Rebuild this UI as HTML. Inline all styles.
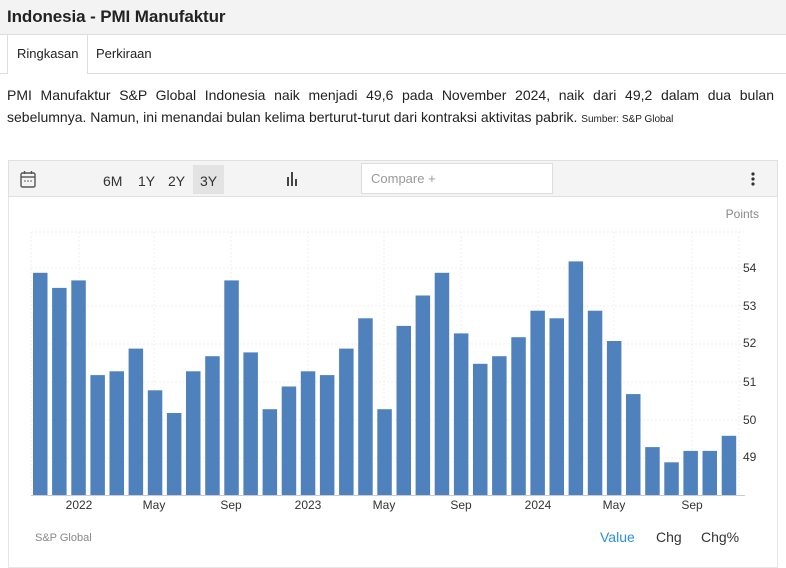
<!DOCTYPE html>
<html><head><meta charset="utf-8"><style>
body{margin:0;width:786px;height:568px;overflow:hidden;background:#fff;font-family:"Liberation Sans",sans-serif;color:#333}
.hdr{position:absolute;left:0;top:0;width:786px;height:34px;background:#f3f3f3;border-bottom:1px solid #ddd}
.hdr span{position:absolute;left:7px;top:7px;font-size:17px;font-weight:bold;color:#222;letter-spacing:-0.1px}
.tabs{position:absolute;left:0;top:35px;width:786px;height:38px;border-bottom:1px solid #ddd}
.tab1{position:absolute;left:7px;top:0;width:79px;border-right:1px solid #ddd;border-left:1px solid #ddd;background:#fff;height:39px}
.tab1 span,.tab2{position:absolute;top:11px;font-size:13px;color:#222}
.tab1 span{left:9px}
.tab2{left:96px}
.txt{position:absolute;left:7px;top:84px;width:767px;font-size:14px;line-height:22px;text-align:justify;color:#222}
.txt small{font-size:10px}
.box{position:absolute;left:8px;top:160px;width:768px;height:406px;border:1px solid #e6e6e6}
.tb{position:absolute;left:8px;top:160px;width:768px;height:35px;background:#f4f4f4;border:1px solid #e0e0e0}
.r{position:absolute;top:12px;font-size:14px;color:#333}
.cmp{position:absolute;left:352px;top:2px;width:190px;height:29px;background:#fff;border:1px solid #ddd}
.cmp span{position:absolute;left:9px;top:7px;font-size:13px;color:#999}
</style></head><body>
<div class="hdr"><span>Indonesia - PMI Manufaktur</span></div>
<div class="tabs"><div class="tab1"><span>Ringkasan</span></div><div class="tab2">Perkiraan</div></div>
<div class="txt">PMI Manufaktur S&amp;P Global Indonesia naik menjadi 49,6 pada November 2024, naik dari 49,2 dalam dua bulan sebelumnya. Namun, ini menandai bulan kelima berturut-turut dari kontraksi aktivitas pabrik. <small>Sumber: S&amp;P Global</small></div>
<div class="box"></div>
<div class="tb">
<svg style="position:absolute;left:11px;top:9px" width="16" height="18" viewBox="0 0 16 18"><rect x="1" y="3" width="14" height="14" rx="1.5" fill="none" stroke="#555" stroke-width="1.4"/><line x1="1" y1="7" x2="15" y2="7" stroke="#555" stroke-width="1.4"/><line x1="4.5" y1="1" x2="4.5" y2="4" stroke="#555" stroke-width="1.4"/><line x1="11.5" y1="1" x2="11.5" y2="4" stroke="#555" stroke-width="1.4"/><circle cx="5" cy="11" r=".8" fill="#555"/><circle cx="8" cy="11" r=".8" fill="#555"/><circle cx="11" cy="11" r=".8" fill="#555"/></svg>
<span class="r" style="left:94px">6M</span><span class="r" style="left:129px">1Y</span><span class="r" style="left:159px">2Y</span>
<div style="position:absolute;left:184px;top:4px;width:31px;height:29px;background:#e3e3e3"></div><span class="r" style="left:191px">3Y</span>
<svg style="position:absolute;left:277px;top:10px" width="14" height="16"><rect x="1" y="6" width="2" height="9" fill="#444"/><rect x="5" y="1" width="2" height="14" fill="#444"/><rect x="9" y="8" width="2" height="7" fill="#444"/></svg>
<div class="cmp"><span>Compare +</span></div>
<svg style="position:absolute;left:742px;top:10px" width="4" height="16"><circle cx="2" cy="3" r="1.6" fill="#333"/><circle cx="2" cy="8" r="1.6" fill="#333"/><circle cx="2" cy="13" r="1.6" fill="#333"/></svg>
</div>
<svg style="position:absolute;left:0;top:0" width="786" height="568" font-family="Liberation Sans, sans-serif">
<text x="759" y="218" font-size="12" fill="#888" text-anchor="end">Points</text>
<g stroke="#efefef" stroke-dasharray="2,2" stroke-width="1">
<line x1="31" y1="232" x2="745" y2="232"/>
<line x1="31" y1="268" x2="745" y2="268"/><line x1="31" y1="306" x2="745" y2="306"/><line x1="31" y1="344" x2="745" y2="344"/><line x1="31" y1="382" x2="745" y2="382"/><line x1="31" y1="420" x2="745" y2="420"/><line x1="31" y1="458" x2="745" y2="458"/>
<line x1="31" y1="232" x2="31" y2="495"/>
<line x1="79" y1="232" x2="79" y2="495"/><line x1="154" y1="232" x2="154" y2="495"/><line x1="231" y1="232" x2="231" y2="495"/><line x1="308" y1="232" x2="308" y2="495"/><line x1="384" y1="232" x2="384" y2="495"/><line x1="461" y1="232" x2="461" y2="495"/><line x1="538" y1="232" x2="538" y2="495"/><line x1="614" y1="232" x2="614" y2="495"/><line x1="692" y1="232" x2="692" y2="495"/><line x1="739" y1="232" x2="739" y2="495"/>
</g>
<line x1="31" y1="495.5" x2="745" y2="495.5" stroke="#ccc"/>
<g font-size="12" fill="#333">
<text x="743" y="272">54</text><text x="743" y="310">53</text><text x="743" y="347">52</text><text x="743" y="386">51</text><text x="743" y="424">50</text><text x="743" y="461">49</text>
</g>
<g font-size="12" fill="#333" text-anchor="middle">
<text x="79" y="509">2022</text><text x="154" y="509">May</text><text x="231" y="509">Sep</text><text x="308" y="509">2023</text><text x="384" y="509">May</text><text x="461" y="509">Sep</text><text x="538" y="509">2024</text><text x="614" y="509">May</text><text x="692" y="509">Sep</text>
</g>
<g id="bars" fill="#4f81bd"></g>
<text x="35" y="541" font-size="11" fill="#888">S&amp;P Global</text>
<text x="600" y="542" font-size="14" fill="#2a8fe0">Value</text>
<text x="656" y="542" font-size="14" fill="#333">Chg</text>
<text x="701" y="542" font-size="14" fill="#333">Chg%</text>
</svg>
<script>
var v=[53.9,53.5,53.7,51.2,51.3,51.9,50.8,50.2,51.3,51.7,53.7,51.8,50.3,50.9,51.3,51.2,51.9,52.7,50.3,52.5,53.3,53.9,52.3,51.5,51.7,52.2,52.9,52.7,54.2,52.9,52.1,50.7,49.3,48.9,49.2,49.2,49.6];
var g=document.getElementById('bars'),s='';
v.forEach(function(x,i){var y=269+(54-x)*37.9;var l=33+i*19.13;s+='<rect x="'+l.toFixed(1)+'" y="'+y.toFixed(1)+'" width="14.5" height="'+(495-y).toFixed(1)+'"/>';});
g.innerHTML=s;
</script>
</body></html>
